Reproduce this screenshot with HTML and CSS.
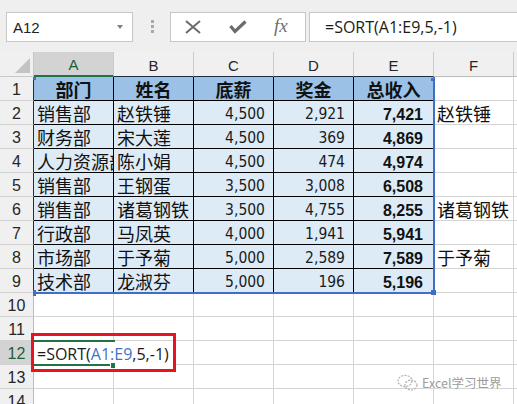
FILE: index.html
```html
<!DOCTYPE html>
<html>
<head>
<meta charset="utf-8">
<link rel="stylesheet" href="styles.css">
</head>
<body>
<div class="fbar">
  <div class="namebox"><span>A12</span><span class="dd"></span></div>
  <div class="grip"><i></i><i></i><i></i></div>
  <div class="fxbox">
    <svg class="ico-x" width="16" height="14" viewBox="0 0 16 14"><path d="M1 1 L15 13 M15 1 L1 13" stroke="#6b6b6b" stroke-width="2" fill="none"/></svg>
    <svg class="ico-ok" width="18" height="14" viewBox="0 0 18 14"><path d="M1.5 6 L6 11.5 L16.5 1.5" stroke="#6b6b6b" stroke-width="3.2" fill="none"/></svg>
    <span class="fx">fx</span>
  </div>
  <div class="finput">=SORT(A1:E9,5,-1)</div>
</div>
<div class="sheet">
  <div class="corner"><svg width="33" height="24" viewBox="0 0 33 24"><polygon points="15,21 30,21 30,6" fill="#c3c3c3"/></svg></div>
  <div class="ch sel">A</div><div class="ch tb">B</div><div class="ch tb">C</div><div class="ch tb">D</div><div class="ch tb">E</div><div class="ch">F</div><div class="ch"></div>

  <div class="rh tl">1</div><div class="c t th">部门</div><div class="c t th">姓名</div><div class="c t th">底薪</div><div class="c t th">奖金</div><div class="c t th">总收入</div><div class="c"></div><div class="c"></div>
  <div class="rh tl">2</div><div class="c t">销售部</div><div class="c t">赵铁锤</div><div class="c t n">4,500</div><div class="c t n">2,921</div><div class="c t n b">7,421</div><div class="c">赵铁锤</div><div class="c"></div>
  <div class="rh tl">3</div><div class="c t">财务部</div><div class="c t">宋大莲</div><div class="c t n">4,500</div><div class="c t n">369</div><div class="c t n b">4,869</div><div class="c"></div><div class="c"></div>
  <div class="rh tl">4</div><div class="c t">人力资源部</div><div class="c t">陈小娟</div><div class="c t n">4,500</div><div class="c t n">474</div><div class="c t n b">4,974</div><div class="c"></div><div class="c"></div>
  <div class="rh tl">5</div><div class="c t">销售部</div><div class="c t">王钢蛋</div><div class="c t n">3,500</div><div class="c t n">3,008</div><div class="c t n b">6,508</div><div class="c"></div><div class="c"></div>
  <div class="rh tl">6</div><div class="c t">销售部</div><div class="c t">诸葛钢铁</div><div class="c t n">3,500</div><div class="c t n">4,755</div><div class="c t n b">8,255</div><div class="c">诸葛钢铁</div><div class="c"></div>
  <div class="rh tl">7</div><div class="c t">行政部</div><div class="c t">马凤英</div><div class="c t n">4,000</div><div class="c t n">1,941</div><div class="c t n b">5,941</div><div class="c"></div><div class="c"></div>
  <div class="rh tl">8</div><div class="c t">市场部</div><div class="c t">于予菊</div><div class="c t n">5,000</div><div class="c t n">2,589</div><div class="c t n b">7,589</div><div class="c">于予菊</div><div class="c"></div>
  <div class="rh tl">9</div><div class="c t">技术部</div><div class="c t">龙淑芬</div><div class="c t n">5,000</div><div class="c t n">196</div><div class="c t n b">5,196</div><div class="c"></div><div class="c"></div>
  <div class="rh">10</div><div class="c"></div><div class="c"></div><div class="c"></div><div class="c"></div><div class="c"></div><div class="c"></div><div class="c"></div>
  <div class="rh">11</div><div class="c"></div><div class="c"></div><div class="c"></div><div class="c"></div><div class="c"></div><div class="c"></div><div class="c"></div>
  <div class="rh rsel">12</div><div class="c"></div><div class="c"></div><div class="c"></div><div class="c"></div><div class="c"></div><div class="c"></div><div class="c"></div>
  <div class="rh">13</div><div class="c"></div><div class="c"></div><div class="c"></div><div class="c"></div><div class="c"></div><div class="c"></div><div class="c"></div>
  <div class="rh">14</div><div class="c"></div><div class="c"></div><div class="c"></div><div class="c"></div><div class="c"></div><div class="c"></div><div class="c"></div>

  <div class="spill"></div>
  <span class="hd hd-tl"></span><span class="hd hd-tr"></span><span class="hd hd-bl"></span><span class="hd hd-br"></span>

  <div class="edit">=SORT(<span class="ref">A1:E9</span>,5,-1)</div>
  <div class="act"><span class="act-top"></span><span class="act-left"></span><span class="act-bot"></span><span class="act-fill"></span></div>
  <div class="mark"></div>

  <div class="wm">
    <svg width="22" height="18" viewBox="0 0 22 18"><g fill="none" stroke="#b0b0b0" stroke-width="1.2" stroke-dasharray="2 1.2"><ellipse cx="8" cy="7" rx="7" ry="5.6"/><ellipse cx="14" cy="11" rx="6" ry="5"/></g></svg>
    <span>Excel学习世界</span>
  </div>
</div>
</body>
</html>
```
FILE: styles.css
```css
* { box-sizing: border-box; }
body {
  margin: 0;
  width: 517px;
  height: 404px;
  overflow: hidden;
  background: #ffffff;
  font-family: "Liberation Sans", Arial, sans-serif;
}
.fbar {
  height: 52px;
  background: #efefef;
  display: flex;
  align-items: flex-start;
  padding: 12px 0 0 6px;
}
.namebox {
  width: 127px;
  height: 30px;
  background: #fff;
  border: 1px solid #c6c6c6;
  display: flex;
  align-items: center;
  justify-content: space-between;
  padding: 0 9px 0 6px;
  font-size: 15px;
  color: #222;
}
.dd {
  width: 0;
  height: 0;
  border-left: 3.5px solid transparent;
  border-right: 3.5px solid transparent;
  border-top: 4px solid #808080;
}
.grip {
  margin: 8px 0 0 18px;
  display: flex;
  flex-direction: column;
  gap: 2px;
}
.grip i {
  display: block;
  width: 3px;
  height: 3px;
  background: #a8a8a8;
}
.fxbox {
  margin-left: 16px;
  width: 136px;
  height: 30px;
  background: #fff;
  border: 1px solid #c6c6c6;
  display: flex;
  align-items: center;
  padding-left: 14px;
}
.ico-ok { margin-left: 28px; }
.fx {
  margin-left: 27px;
  font-family: "Liberation Serif", serif;
  font-style: italic;
  font-size: 19px;
  color: #707070;
  margin-top: -3px;
}
.finput {
  margin-left: 3px;
  flex: 1;
  height: 30px;
  background: #fff;
  border: 1px solid #c6c6c6;
  border-right: none;
  display: flex;
  align-items: center;
  padding-left: 15px;
  font-family: "Open Sans", sans-serif;
  font-size: 16px;
  color: #1a1a1a;
}
.sheet {
  position: relative;
  display: grid;
  grid-template-columns: 34px repeat(6, 80px) 1fr;
  grid-template-rows: 25px repeat(14, 24px);
}
.corner {
  background: #f0f0f0;
  border-right: 1px solid #c8c8c8;
  border-bottom: 1px solid #c8c8c8;
}
.corner svg { display: block; }
.ch {
  background: #f0f0f0;
  border-right: 1px solid #cacaca;
  border-bottom: 1px solid #bcbcbc;
  display: flex;
  align-items: center;
  justify-content: center;
  padding-top: 2px;
  font-size: 15px;
  color: #262626;
}
.ch.tb { border-bottom-color: #1d2b44; }
.ch.sel {
  background: #d3d3d3;
  border-bottom: 2px solid #217346;
  color: #1b5e38;
}
.rh {
  background: #f0f0f0;
  border-right: 1px solid #bcbcbc;
  border-bottom: 1px solid #d2d2d2;
  display: flex;
  align-items: center;
  justify-content: center;
  padding-top: 3px;
  font-size: 16px;
  color: #262626;
}
.rh.tl { border-right-color: #1d2b44; }
.rh.rsel {
  background: #d3d3d3;
  color: #1b5e38;
}
.c {
  border-right: 1px solid #d4d4d4;
  border-bottom: 1px solid #d4d4d4;
  display: flex;
  align-items: flex-end;
  padding: 0 3px 2px 3px;
  overflow: hidden;
  white-space: nowrap;
  font-family: "Noto Sans CJK SC", sans-serif;
  font-size: 18px;
  line-height: 18px;
  color: #111;
}
.c.t {
  background: #ddebf7;
  border-right-color: #000;
  border-bottom-color: #000;
}
.c.th {
  background: #9bc2e6;
  font-weight: bold;
  justify-content: center;
}
.c.n {
  justify-content: flex-end;
  padding: 0 8px 1px 3px;
  font-family: "Liberation Sans Narrow", "DejaVu Sans Condensed", "Liberation Sans", sans-serif;
  font-size: 15.5px;
  line-height: 17px;
  color: #1a1a1a;
}
.c.n.b {
  font-family: "Liberation Sans", Arial, sans-serif;
  font-weight: bold;
  font-size: 16px;
  padding-right: 10px;
  color: #111;
}
.spill {
  position: absolute;
  left: 34px;
  top: 25px;
  width: 401px;
  height: 217px;
  border-right: 2px solid #3e6ec5;
  border-bottom: 2px solid #3e6ec5;
}
.hd {
  position: absolute;
  background: #3e6ec5;
}
.hd-tl { left: 33px; top: 25px; width: 3px; height: 3px; }
.hd-tr { left: 431px; top: 26px; width: 4px; height: 3px; }
.hd-bl { left: 33px; top: 238px; width: 3px; height: 6px; }
.hd-br { left: 431px; top: 238px; width: 5px; height: 5px; }
.edit {
  position: absolute;
  left: 34px;
  top: 290px;
  width: 140px;
  height: 23px;
  background: #fff;
  padding-left: 3px;
  display: flex;
  align-items: center;
  font-family: "Open Sans", sans-serif;
  font-size: 16px;
  color: #1a1a1a;
}
.ref { color: #3f74c9; }
.act { position: absolute; left: 0; top: 0; }
.act span { position: absolute; background: #217346; }
.act-top { left: 32px; top: 288px; width: 83px; height: 2px; }
.act-left { left: 32px; top: 288px; width: 2px; height: 26px; }
.act-bot { left: 32px; top: 312px; width: 78px; height: 2px; }
.act-fill { left: 111px; top: 311px; width: 4px; height: 5px; }
.mark {
  position: absolute;
  left: 31px;
  top: 281px;
  width: 145px;
  height: 39px;
  border: 3px solid #e5141e;
}
.wm {
  position: absolute;
  left: 397px;
  top: 321px;
  display: flex;
  align-items: center;
  gap: 3px;
}
.wm svg { display: block; }
.wm span {
  font-family: "Noto Sans CJK SC", sans-serif;
  font-size: 12.5px;
  color: #9c9c9c;
  text-shadow: 0 0 2px #fff, 0 0 1px #fff;
}
```
